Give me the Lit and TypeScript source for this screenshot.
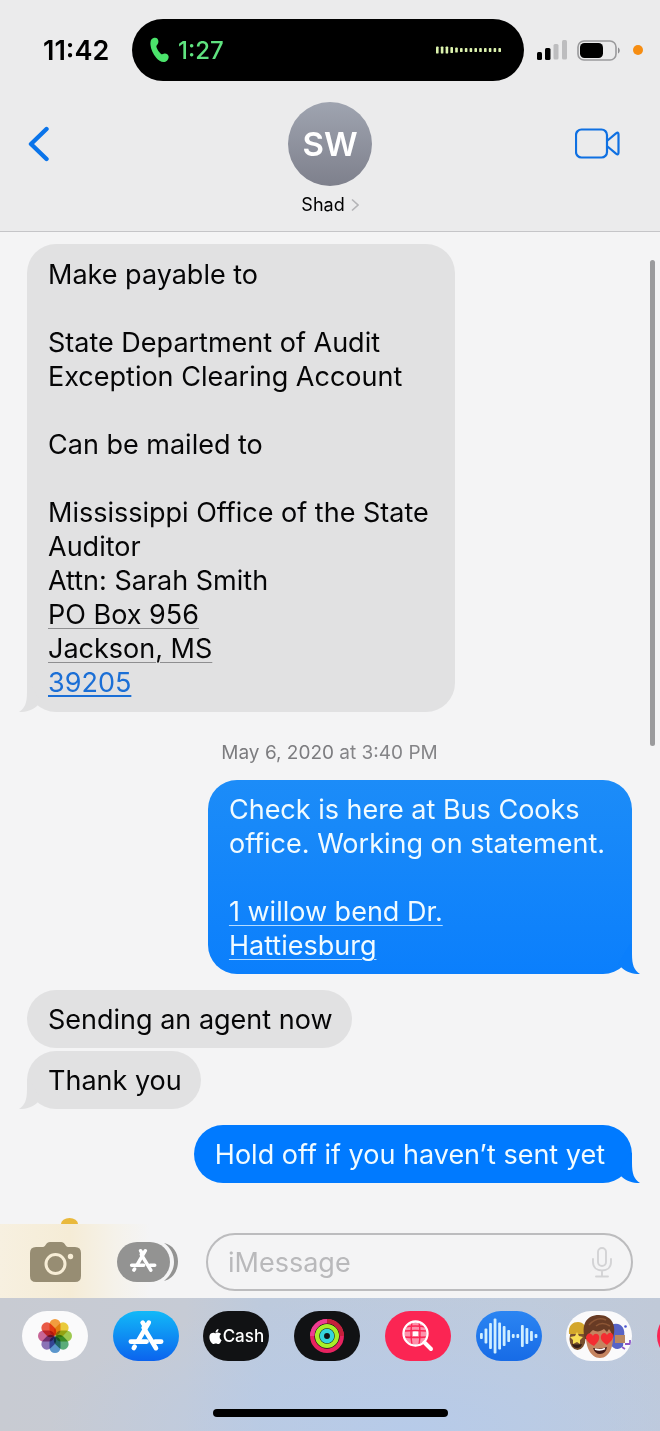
import { LitElement, html, css, svg } from "lit";
import { customElement, property } from "lit/decorators.js";
import { classMap } from "lit/directives/class-map.js";

const storeGlyph = svg`
  <g fill="none" stroke="#fff" stroke-width="4.6" stroke-linecap="round">
    <path d="M14.6 3.6 L17.4 8 M20.8 3.6 L9.8 22.4 M5.8 29 L6.7 27.6" />
    <path d="M15.6 8.6 L28 29.2" />
    <path d="M2.8 22.6 H18.6 M27 22.6 H33.2" />
  </g>`;

@customElement("message-bubble")
class MessageBubble extends LitElement {
  @property({ type: Boolean, reflect: true }) sent = false;
  @property({ type: Boolean }) tail = false;
  @property({ type: Boolean, reflect: true }) earlier = false;
  @property({ type: Boolean, reflect: true }) long = false;

  static styles = css`
    :host {
      display: block;
      position: relative;
      box-sizing: border-box;
      align-self: flex-start;
      max-width: 446px;
      padding: 13px 19px 11px 21px;
      border-radius: 29px;
      background: var(--bubble);
      color: #060607;
      font-size: 27px;
      line-height: 34px;
      --bubble: #e1e1e2;
    }
    :host([long]) {
      padding: 14px 26px 12px 21px;
    }
    :host([sent]) {
      align-self: flex-end;
      padding-right: 27px;
      color: #f1fbff;
      --bubble: #007aff;
    }
    :host([sent][earlier]) {
      background: linear-gradient(#1c8cf8, #0b7ffc);
      --bubble: #0b7ffc;
    }
    .tail {
      position: absolute;
      left: -8px;
      bottom: 0;
      width: 30px;
      height: 30px;
      fill: var(--bubble);
    }
    .tail.right {
      left: auto;
      right: -8px;
      transform: scaleX(-1);
    }
    .text {
      position: relative;
    }
  `;

  render() {
    return html`
      ${this.tail
        ? html`<svg class=${classMap({ tail: true, right: this.sent })} viewBox="0 0 30 30" aria-hidden="true">
            <path d="M8 0 V10 C8 21 6 26 0 30 C8 30 13 28 18 24 L22 20 L10 0Z" />
          </svg>`
        : null}
      <div class="text"><slot></slot></div>
    `;
  }
}

@customElement("app-root")
class AppRoot extends LitElement {
  static styles = css`
    :host {
      display: flex;
      flex-direction: column;
      min-height: 100vh;
      overflow: hidden;
      background: #f4f4f5;
      color: #000;
      font-family: Inter, "Liberation Sans", sans-serif;
    }
    * {
      box-sizing: border-box;
    }
    button {
      display: block;
      padding: 0;
      border: 0;
      background: none;
      color: inherit;
      font: inherit;
    }
    svg {
      display: block;
    }
    .top {
      padding-top: 19px;
      background: #ebebec;
      border-bottom: 1px solid #c5c5c8;
    }
    .status {
      display: grid;
      grid-template-columns: 132px 1fr 136px;
      align-items: center;
    }
    .time {
      padding-left: 43px;
      font-size: 27px;
      font-weight: 600;
    }
    .island {
      display: flex;
      align-items: center;
      gap: 9px;
      height: 62px;
      padding: 0 22px 0 18px;
      border-radius: 31px;
      background: #000;
      color: #5fe37f;
      font-size: 24px;
      font-weight: 500;
    }
    .wave {
      margin-left: auto;
    }
    .indicators {
      display: flex;
      align-items: center;
      gap: 10px;
      padding-left: 12px;
    }
    .dot {
      width: 10px;
      height: 10px;
      margin-left: 3px;
      border-radius: 50%;
      background: #f68d12;
    }
    .nav {
      display: grid;
      grid-template-columns: 1fr auto 1fr;
      align-items: start;
      padding: 21px 39px 15px 27px;
    }
    .back {
      justify-self: start;
      margin-top: 24px;
    }
    .video {
      justify-self: end;
      margin-top: 25px;
    }
    .contact {
      display: flex;
      flex-direction: column;
      align-items: center;
      gap: 8px;
      margin-left: 12px;
    }
    .avatar {
      display: grid;
      place-items: center;
      width: 84px;
      height: 84px;
      border-radius: 50%;
      background: linear-gradient(#9fa4b0, #7e808c);
      color: #fff;
      font-size: 33px;
      font-weight: 600;
    }
    .name {
      display: flex;
      align-items: center;
      gap: 6px;
      font-size: 18px;
      line-height: 22px;
    }
    .thread {
      position: relative;
      display: flex;
      flex: 1;
      flex-direction: column;
      gap: 16px;
      padding: 12px 28px 40px 27px;
    }
    .group {
      display: flex;
      flex-direction: column;
      gap: 3px;
    }
    .stamp {
      margin: 14px 0 0;
      text-align: center;
      color: #848487;
      font-size: 19px;
      line-height: 22px;
    }
    .stamp b {
      color: #7c7c7f;
      font-weight: 400;
    }
    .address {
      color: inherit;
      text-decoration: underline 1px;
      text-decoration-color: #8e8e90;
      text-underline-offset: 4px;
    }
    .address.light {
      text-decoration-color: #b5dcff;
    }
    .zip {
      color: #1b6fd6;
      text-decoration: underline 2px;
      text-underline-offset: 3px;
    }
    .thumb {
      position: absolute;
      top: 28px;
      right: 5px;
      width: 5px;
      height: 486px;
      border-radius: 3px;
      background: #9b9b9d;
    }
    .peek {
      position: absolute;
      left: 61px;
      bottom: 0;
      width: 17px;
      height: 6px;
      border-radius: 50% 50% 0 0 / 100% 100% 0 0;
      background: #e9b93c;
    }
    .compose {
      display: flex;
      align-items: center;
      padding: 9px 27px 7px 30px;
      background: linear-gradient(90deg, #f7f0e0 0, #f5ecd6 70px, #f5f2ea 115px, #f4f4f5 150px);
    }
    .apps {
      margin-left: 36px;
    }
    .field {
      display: flex;
      flex: 1;
      align-items: center;
      min-width: 0;
      height: 58px;
      margin-left: 28px;
      padding: 0 19px 0 20px;
      border: 2px solid #bcbcbe;
      border-radius: 29px;
    }
    .input {
      flex: 1;
      min-width: 0;
      padding: 0;
      border: 0;
      outline: 0;
      background: none;
      font: inherit;
      font-size: 27px;
    }
    .input::placeholder {
      color: #b9b9bb;
      opacity: 1;
    }
    .tray {
      padding: 13px 0 14px;
      background:
        radial-gradient(ellipse 360px 140px at 62% 100%, #b7cbe9, transparent),
        linear-gradient(90deg, #c8cbd2 0, #c6cbd5 28%, #bdcadd 40%, #bfcbdc 80%, #c0c9d8);
    }
    .drawer {
      display: flex;
      justify-content: space-between;
      margin: 0 -63px 48px 0;
      padding-left: 22px;
    }
    .app {
      display: flex;
      align-items: center;
      justify-content: center;
      flex: none;
      width: 66px;
      height: 50px;
      overflow: hidden;
      border-radius: 25px;
      background: #111214;
    }
    .app.white {
      background: #fafafb;
    }
    .app.store {
      background: linear-gradient(#12b9f8, #0b63ee);
    }
    .app.red {
      background: #fb2553;
    }
    .app.audio {
      background: linear-gradient(#2b85f2, #176be6);
    }
    .app.cash {
      gap: 1px;
      color: #fff;
      font-size: 17px;
      font-weight: 500;
    }
    .home {
      width: 235px;
      height: 8px;
      margin: 0 auto;
      border-radius: 4px;
      background: #000;
    }
  `;

  private petals() {
    const colors = ["#f7962a", "#ecc928", "#97c83e", "#4ba86c", "#4b8ecb", "#8265b2", "#c6568f", "#ec4a34"];
    return colors.map(
      (c, i) => svg`<rect x="-5.5" y="-17" width="11" height="16.5" rx="5.5" fill=${c} opacity="0.9"
        transform="rotate(${i * 45})" style="mix-blend-mode:multiply" />`
    );
  }

  private bars(heights: number[], step: number, width: number, mid: number, color: string) {
    return heights.map(
      (h, i) => svg`<rect x=${i * step} y=${mid - h / 2} width=${width} height=${h} rx=${width / 3} fill=${color} />`
    );
  }

  render() {
    return html`
      <header class="top">
        <div class="status">
          <span class="time">11:42</span>
          <div class="island">
            <svg width="19" height="26" viewBox="0 0 19 26" aria-hidden="true">
              <path fill="#4be36b" d="M1.4 2.5 C2.7 .7 6.2 .1 7.5 1.8 C8.8 3.5 8.7 6.2 7.4 7.6 C6.5 8.6 6.2 9.3 6.5 10.3 C7.2 12.7 9.3 15.6 11 16.9 C11.8 17.5 12.7 17.3 13.8 16.8 C15.8 16 18.2 17.3 18.6 19.3 C19 21.8 17 24.6 14.5 25 C11.5 25.5 8.5 23.6 6.2 20.8 C3 17 .9 12 .5 8 C.3 5.8 .5 3.8 1.4 2.5Z" />
            </svg>
            <span>1:27</span>
            <svg class="wave" width="66" height="8" viewBox="0 0 66 8" aria-hidden="true">
              ${this.bars([7, 7, 7, 6, 5, 4, 4, 4, 4, 4, 4, 4, 4, 4], 4.8, 2.6, 4, "#dcf3ae")}
            </svg>
          </div>
          <div class="indicators">
            <svg width="31" height="20" viewBox="0 0 31 20" role="img" aria-label="Signal, two of four bars">
              <rect x="1" y="12" width="5" height="8" rx="1.5" />
              <rect x="9" y="8" width="5.5" height="12" rx="1.5" />
              <rect x="17.5" y="4" width="5" height="15.5" rx="1.5" fill="#bdbdbf" />
              <rect x="26" y="0" width="5" height="19.5" rx="1.5" fill="#bdbdbf" />
            </svg>
            <svg width="43" height="21" viewBox="0 0 43 21" role="img" aria-label="Battery">
              <rect x="1" y="1" width="38" height="19" rx="6" fill="none" stroke="#9a9a9c" stroke-width="1.6" />
              <rect x="3" y="3" width="23" height="15" rx="4.5" />
              <path d="M41 7.5 C43.3 8.5 43.3 12.5 41 13.5Z" fill="#8d8d90" />
            </svg>
            <span class="dot"></span>
          </div>
        </div>
        <div class="nav">
          <button class="back" aria-label="Back">
            <svg width="24" height="36" viewBox="0 0 24 36">
              <path d="M19.5 3 L4 18 L19.5 33" fill="none" stroke="#0a74ea" stroke-width="4.4" stroke-linecap="round" stroke-linejoin="round" />
            </svg>
          </button>
          <button class="contact">
            <span class="avatar">SW</span>
            <span class="name">
              Shad
              <svg width="8" height="14" viewBox="0 0 8 14"><path d="M1 1.5 L7 7 L1 12.5" fill="none" stroke="#b4b4b7" stroke-width="1.6" /></svg>
            </span>
          </button>
          <button class="video" aria-label="Video call">
            <svg width="46" height="32" viewBox="0 0 46 32" fill="none" stroke="#0f70e2" stroke-width="2.2" stroke-linejoin="round">
              <rect x="1" y="2.500" width="31" height="28" rx="5.5" />
              <path d="M32.5 13.5 L41 6.3 Q43.5 4.5 43.5 7.5 V25.5 Q43.5 28.5 41 26.7 L32.5 19.5" />
            </svg>
          </button>
        </div>
      </header>

      <main class="thread">
        <message-bubble long tail>
          Make payable to<br /><br />State Department of Audit<br />Exception Clearing Account<br /><br />Can be mailed to<br /><br />Mississippi Office of the State<br />Auditor<br />Attn: Sarah Smith<br />
          <a class="address" href="#address">PO Box 956<br />Jackson, MS</a><br />
          <a class="zip" href="#zip">39205</a>
        </message-bubble>
        <p class="stamp"><b>May 6, 2020</b> at 3:40 PM</p>
        <message-bubble sent earlier tail>
          Check is here at Bus Cooks<br />office. Working on statement.<br /><br />
          <a class="address light" href="#office">1 willow bend Dr.<br />Hattiesburg</a>
        </message-bubble>
        <div class="group">
          <message-bubble>Sending an agent now</message-bubble>
          <message-bubble tail>Thank you</message-bubble>
        </div>
        <message-bubble sent tail>Hold off if you haven’t sent yet</message-bubble>
        <span class="thumb"></span>
        <span class="peek"></span>
      </main>

      <form class="compose" @submit=${(e: Event) => e.preventDefault()}>
        <button type="button" aria-label="Camera">
          <svg width="51" height="40" viewBox="0 0 51 40">
            <path fill="#978d73" d="M6 5 H13 C15.5 5 16 0 20 0 H31 C35 0 35.5 5 38 5 H45 Q51 5 51 11 V34 Q51 40 45 40 H6 Q0 40 0 34 V11 Q0 5 6 5Z" />
            <circle cx="25.5" cy="22" r="9.5" fill="none" stroke="#f7edd6" stroke-width="3" />
            <circle cx="40.5" cy="14.5" r="2.7" fill="#f7edd6" />
          </svg>
        </button>
        <button class="apps" type="button" aria-label="Apps">
          <svg width="61" height="40" viewBox="0 0 61 40">
            <rect x="0" y="0" width="53" height="40" rx="20" fill="#939392" />
            <path fill="#939392" d="M47 1 C56 3 61 10.5 61 19.5 C61 28.5 56 37 47 39 C53 34 57 27.5 57 20 C57 12 53.5 5.5 47 1Z" />
            <g transform="translate(12.5 6) scale(.76)">${storeGlyph}</g>
          </svg>
        </button>
        <div class="field">
          <input class="input" type="text" placeholder="iMessage" aria-label="iMessage" />
          <button type="button" aria-label="Dictate">
            <svg width="20" height="31" viewBox="0 0 20 31" fill="none" stroke="#d3d3d5" stroke-width="1.9" stroke-linecap="round">
              <rect x="6" y="1" width="8" height="18" rx="4" />
              <path d="M1 12 V15 C1 20.5 5 23.5 10 23.5 C15 23.5 19 20.5 19 15 V12 M10 23.5 V29.5 M4 29.5 H16" />
            </svg>
          </button>
        </div>
      </form>

      <footer class="tray">
        <nav class="drawer">
          <button class="app white" aria-label="Photos">
            <svg width="36" height="36" viewBox="-18 -18 36 36">${this.petals()}</svg>
          </button>
          <button class="app store" aria-label="App Store">
            <svg width="36" height="34" viewBox="0 0 36 34">${storeGlyph}</svg>
          </button>
          <button class="app cash" aria-label="Apple Cash">
            <svg width="13" height="15" viewBox="2 0 20 24">
              <path fill="#fff" d="M12.152 6.896c-.948 0-2.415-1.078-3.960-1.040-2.040.027-3.910 1.183-4.961 3.014-2.117 3.675-.546 9.103 1.519 12.090 1.013 1.454 2.208 3.090 3.792 3.039 1.520-.065 2.090-.987 3.935-.987 1.831 0 2.350.987 3.960.948 1.637-.026 2.676-1.480 3.676-2.948 1.156-1.688 1.636-3.325 1.662-3.415-.039-.013-3.182-1.221-3.220-4.857-.026-3.040 2.480-4.494 2.597-4.559-1.429-2.090-3.623-2.324-4.390-2.376-2-.156-3.675 1.090-4.610 1.090zM15.530 3.830c.843-1.012 1.400-2.427 1.245-3.830-1.207.052-2.662.805-3.532 1.818-.780.896-1.454 2.338-1.273 3.714 1.338.104 2.715-.688 3.559-1.701" />
            </svg>
            <span>Cash</span>
          </button>
          <button class="app" aria-label="Activity">
            <svg width="36" height="36" viewBox="-18 -18 36 36" fill="none" stroke-width="4.3">
              <circle r="14.8" stroke="#e82360" />
              <path d="M0 -14.8 A14.8 14.8 0 0 1 14.8 0" stroke="#c5203a" />
              <path d="M-14.8 0 A14.8 14.8 0 0 1 0 -14.8" stroke="#ee3c93" />
              <circle r="9.9" stroke="#a8ee28" />
              <circle r="5.1" stroke="#35d5dc" />
            </svg>
          </button>
          <button class="app red" aria-label="Images">
            <svg width="34" height="34" viewBox="0 0 34 34" fill="none" stroke="#fff">
              <circle cx="14.5" cy="14.5" r="11" fill="#fd91ab" stroke="none" />
              <rect x="12" y="12" width="5" height="5" fill="#fff" stroke="none" />
              <path d="M4 8 Q14 6 25 8 M3 12 Q14 11 26 12 M3 18 Q14 19 26 18 M11 3 Q9 14 11 26 M18 3 Q20 14 18 26" stroke="#fb2553" stroke-width="1.4" />
              <circle cx="14.5" cy="14.5" r="12" stroke-width="2.3" />
              <path d="M23.5 23.5 L30 30" stroke-width="4" stroke-linecap="round" />
            </svg>
          </button>
          <button class="app audio" aria-label="Audio messages">
            <svg width="58" height="36" viewBox="0 0 58 36">
              ${this.bars([6, 15, 26, 35, 27, 20, 12, 4, 4, 22, 16, 10, 4], 4.55, 2.8, 18, "#cfeeff")}
            </svg>
          </button>
          <button class="app white" aria-label="Memoji">
            <svg width="66" height="50" viewBox="0 0 66 50">
              <ellipse cx="11.5" cy="28" rx="8" ry="11" fill="#79502f" />
              <path d="M3 23 C2 14 7 11 12 11 C17 11 21 15 20 23Z" fill="#d3a62c" />
              <path d="M11 21 L13 25 L17 26 L14 29 L14 33 L11 31 L7 33 L7 29 L4 26 L9 25Z" fill="#f7dd55" />
              <path d="M6 33 Q11 34 16 33 Q15 37 11 37 Q7 37 6 33Z" fill="#331d16" />
              <path d="M45 14 C54 10 60 17 58 26 L57 35 C53 40 47 38 45 34Z" fill="#5663c6" />
              <rect x="49" y="24" width="10" height="8" fill="#b98761" />
              <path d="M59 33 H64 V29 M56 36 L59 38" stroke="#8e56c9" stroke-width="1.8" fill="none" />
              <circle cx="59.5" cy="15.5" r="1.3" fill="#4b55d0" />
              <path d="M20 22 C20 10 47 10 47 22 C48 34 44 47 34 47 C24 47 19 34 20 22Z" fill="#c58460" />
              <path d="M19 28 C15 14 20 4 33 4 C46 4 51 15 47 27 C46 23 45 21 43 18 L41 21 L38 18 C34 21 30 21 27 19 C24 21 22 24 21 28Z" fill="#683b24" />
              <path d="M23 14 Q31 5 40 9 M30 15 Q36 10 44 15" stroke="#8d5635" stroke-width="1.6" fill="none" />
              <path d="M28 35 C22 32 18 27 21 24 C23 21 26 23 27 25 C28 22 32 22 33 25 C34 29 31 32 28 35Z M41 34 C36 31 33 27 36 23 C38 21 40 22 41 24 C43 21 46 21 47 24 C48 28 44 31 41 34Z" fill="#f32d32" />
              <path d="M27 37 Q34 39 41 36 Q40 43 34 43 Q29 43 27 37Z" fill="#421a18" />
              <path d="M29 38 Q34 40 39 37.5" stroke="#fff" stroke-width="1.6" fill="none" />
            </svg>
          </button>
          <button class="app red" aria-label="Music"></button>
        </nav>
        <div class="home"></div>
      </footer>
    `;
  }
}
